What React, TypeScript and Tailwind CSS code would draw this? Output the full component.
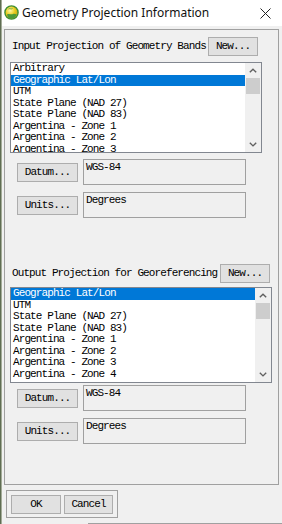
import React from "react";

const mono = "font-mono text-[11px] tracking-[-0.9px] text-black";

function Chevron({ up }: { up: boolean }) {
  return (
    <svg width="8" height="5" viewBox="0 0 8 5" className="block">
      {up ? (
        <path d="M0.8 4.3 L4 1.2 L7.2 4.3" fill="none" stroke="#606060" strokeWidth="1.4" />
      ) : (
        <path d="M0.8 0.8 L4 3.9 L7.2 0.8" fill="none" stroke="#606060" strokeWidth="1.4" />
      )}
    </svg>
  );
}

function ListBox({
  items,
  selected,
  className,
}: {
  items: string[];
  selected: number;
  className: string;
}) {
  return (
    <div className={`flex border border-[#828790] bg-white ${className}`}>
      <div className="flex-1 overflow-hidden flex flex-col">
        {items.map((t, i) => (
          <div
            key={i}
            className={`h-[11.5px] shrink-0 leading-[11.5px] pl-[2px] whitespace-pre ${mono} ${
              i === selected ? "bg-[#0078d7] !text-white" : ""
            }`}
          >
            {t}
          </div>
        ))}
      </div>
      <div className="w-[16px] bg-[#f0f0f0] flex flex-col">
        <div className="h-[15px] flex items-center justify-center">
          <Chevron up />
        </div>
        <div className="h-[16px] mx-[1px] bg-[#cdcdcd]" />
        <div className="flex-1" />
        <div className="h-[15px] flex items-center justify-center">
          <Chevron up={false} />
        </div>
      </div>
    </div>
  );
}

function Btn({ label, className }: { label: string; className: string }) {
  return (
    <div
      className={`flex items-center justify-center border border-[#adadad] bg-[#e1e1e1] ${mono} ${className}`}
    >
      {label}
    </div>
  );
}

function FieldRow({ label, value, className }: { label: string; value: string; className: string }) {
  return (
    <div className={`flex items-center ml-[12px] ${className}`}>
      <Btn label={label} className="w-[61px] h-[19px]" />
      <div className={`ml-[5px] w-[163px] h-[26px] border border-[#a0a0a0] bg-[#f0f0f0] pl-[2px] pt-[1px] leading-[12px] ${mono}`}>
        {value}
      </div>
    </div>
  );
}

const inputItems = [
  "Arbitrary",
  "Geographic Lat/Lon",
  "UTM",
  "State Plane (NAD 27)",
  "State Plane (NAD 83)",
  "Argentina - Zone 1",
  "Argentina - Zone 2",
  "Argentina - Zone 3",
];

const outputItems = [
  "Geographic Lat/Lon",
  "UTM",
  "State Plane (NAD 27)",
  "State Plane (NAD 83)",
  "Argentina - Zone 1",
  "Argentina - Zone 2",
  "Argentina - Zone 3",
  "Argentina - Zone 4",
];

export default function App() {
  return (
    <div className="relative w-[282px] h-[524px] bg-[#f0f0f0] overflow-hidden flex flex-col">
      <div className="absolute left-0 top-0 bottom-0 w-[1px] bg-[#5f6d52]" />
      <div className="absolute left-[1px] top-0 bottom-0 w-[1px] bg-[#a3ab98]" />

      {/* Title bar */}
      <div className="h-[26px] shrink-0 bg-white flex items-center">
        <svg width="15" height="15" viewBox="0 0 15 15" className="ml-[4px] mt-[-1px]">
          <defs>
            <radialGradient id="g" cx="0.4" cy="0.35" r="0.7">
              <stop offset="0" stopColor="#fff7a8" />
              <stop offset="0.5" stopColor="#e9cc1e" />
              <stop offset="1" stopColor="#b89a10" />
            </radialGradient>
          </defs>
          <circle cx="7.5" cy="7.5" r="6.6" fill="url(#g)" stroke="#3f8f35" strokeWidth="1.4" />
          <path d="M3 9.5 C5 8 7 10 9 9 C10.5 8.3 11.5 9.5 12.8 9 C12 12 9.5 13.8 7 13.7 C4.8 13.5 3.3 11.8 3 9.5 Z" fill="#4c9a3a" />
          <path d="M4.5 4 C6 3 7 4.5 8.5 3.5" fill="none" stroke="#6aa83f" strokeWidth="1" />
        </svg>
        <div className="ml-[3px] font-['Noto_Sans',sans-serif] text-[12px] text-[#111] leading-none">
          Geometry Projection Information
        </div>
        <svg width="11" height="11" viewBox="0 0 11 11" className="ml-auto mr-[11px] mt-[1px]">
          <path d="M0.5 0.5 L10.5 10.5 M10.5 0.5 L0.5 10.5" stroke="#222" strokeWidth="1" />
        </svg>
      </div>

      {/* Main frame */}
      <div className="mt-[3px] ml-[4px] w-[275px] h-[456px] shrink-0 border border-[#a0a0a0] flex flex-col">
        <div className="mt-[7px] flex items-center pl-[7px]">
          <div className={`w-[196px] whitespace-pre ${mono}`}>Input Projection of Geometry Bands</div>
          <Btn label="New..." className="w-[50px] h-[19px]" />
        </div>
        <ListBox items={inputItems} selected={1} className="mt-[6px] ml-[5px] w-[252px] h-[91px]" />
        <FieldRow label="Datum..." value="WGS-84" className="mt-[6px]" />
        <FieldRow label="Units..." value="Degrees" className="mt-[7px]" />

        <div className="mt-[46px] flex items-center pl-[7px]">
          <div className={`w-[208px] whitespace-pre ${mono}`}>Output Projection for Georeferencing</div>
          <Btn label="New..." className="w-[50px] h-[19px]" />
        </div>
        <ListBox items={outputItems} selected={0} className="mt-[4px] ml-[5px] w-[262px] h-[96px]" />
        <FieldRow label="Datum..." value="WGS-84" className="mt-[2px]" />
        <FieldRow label="Units..." value="Degrees" className="mt-[7px]" />
      </div>

      {/* OK / Cancel */}
      <div className="mt-[5px] ml-[6px] w-[112px] h-[28px] shrink-0 border border-[#a0a0a0] flex items-center pl-[4px]">
        <Btn label="OK" className="w-[50px] h-[19px]" />
        <Btn label="Cancel" className="ml-[3px] w-[49px] h-[19px]" />
      </div>
      <div className="mt-[5px] ml-[88px] h-[1px] shrink-0 bg-[#a0a0a0]" />
    </div>
  );
}
